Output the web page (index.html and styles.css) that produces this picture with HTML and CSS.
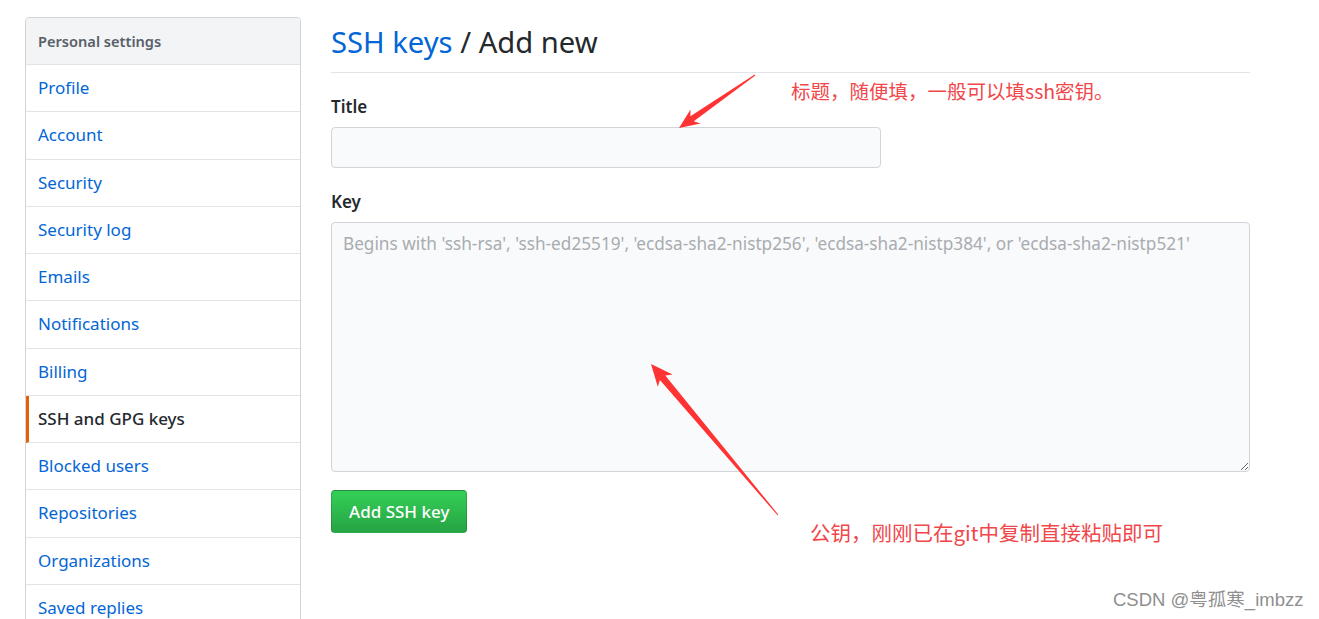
FILE: index.html
```html
<!DOCTYPE html>
<html lang="zh-CN">
<head>
<meta charset="utf-8">
<title>SSH keys / Add new</title>
<link rel="stylesheet" href="styles.css">
</head>
<body>
<div class="page">
  <nav class="menu">
    <div class="menu-heading">Personal settings</div>
    <a class="menu-item" href="#">Profile</a>
    <a class="menu-item" href="#">Account</a>
    <a class="menu-item" href="#">Security</a>
    <a class="menu-item" href="#">Security log</a>
    <a class="menu-item" href="#">Emails</a>
    <a class="menu-item" href="#">Notifications</a>
    <a class="menu-item" href="#">Billing</a>
    <a class="menu-item selected" href="#">SSH and GPG keys</a>
    <a class="menu-item" href="#">Blocked users</a>
    <a class="menu-item" href="#">Repositories</a>
    <a class="menu-item" href="#">Organizations</a>
    <a class="menu-item" href="#">Saved replies</a>
  </nav>
  <main class="content">
    <h1 class="subhead"><a href="#" class="crumb">SSH keys</a> / Add new</h1>
    <form class="form">
      <label class="label" for="title">Title</label>
      <input id="title" class="input-title" type="text">
      <label class="label" for="key">Key</label>
      <textarea id="key" class="input-key" placeholder="Begins with 'ssh-rsa', 'ssh-ed25519', 'ecdsa-sha2-nistp256', 'ecdsa-sha2-nistp384', or 'ecdsa-sha2-nistp521'"></textarea>
      <div class="actions"><button type="button" class="btn-primary">Add SSH key</button></div>
    </form>
  </main>
</div>

<svg class="arrows" width="1319" height="619" viewBox="0 0 1319 619" aria-hidden="true">
  <polygon fill="#ff3333" points="679,128 700.5,123.5 693.8,121.3 755.3,75.4 754.7,74.6 690.4,116.3 690.5,109.5"/>
  <polygon fill="#ff3333" points="651,364 672.6,374.6 665.3,375.5 778.4,514.7 777.6,515.3 659.9,380.1 657.8,386.8"/>
</svg>
<div class="note note-title">标题，随便填，一般可以填ssh密钥。</div>
<div class="note note-key">公钥，刚刚已在git中复制直接粘贴即可</div>
<div class="watermark">CSDN @粤孤寒_imbzz</div>
</body>
</html>
```

FILE: styles.css
```css
html, body {
  margin: 0;
  padding: 0;
  overflow: hidden;
  background: #fff;
}
body {
  font-family: "Noto Sans", "Noto Sans CJK SC", sans-serif;
  color: #24292e;
  position: relative;
  width: 1319px;
  height: 619px;
}
.page {
  display: flex;
  gap: 30px;
  padding: 17px 0 0 25px;
}
.menu {
  width: 276px;
  flex: none;
  display: flex;
  flex-direction: column;
  border: 1px solid #d1d5da;
  border-radius: 4px;
  box-sizing: border-box;
}
.menu-heading {
  height: 46px;
  line-height: 46px;
  padding-left: 12px;
  background: #f3f4f6;
  color: #586069;
  font-weight: 600;
  font-size: 14.6px;
  border-bottom: 1px solid #e1e4e8;
  border-radius: 4px 4px 0 0;
}
.menu-item {
  display: block;
  height: 46.25px;
  line-height: 46px;
  padding-left: 12px;
  font-size: 17px;
  color: #0366d6;
  text-decoration: none;
  border-bottom: 1px solid #e1e4e8;
}
.menu-item.selected {
  color: #24292e;
  font-weight: 500;
  border-left: 3px solid #e36209;
  padding-left: 9px;
}
.content {
  width: 919px;
  flex: none;
}
.subhead {
  margin: 0;
  padding: 5px 0 10px;
  line-height: 40px;
  font-size: 29.2px;
  font-weight: 400;
  border-bottom: 1px solid #e1e4e8;
}
.crumb {
  color: #0366d6;
  text-decoration: none;
}
.form {
  display: flex;
  flex-direction: column;
  align-items: flex-start;
}
.label {
  margin-top: 22px;
  margin-bottom: 8px;
  line-height: 24px;
  font-size: 17px;
  font-weight: 600;
}
.input-title {
  width: 550px;
  height: 41px;
  box-sizing: border-box;
  border: 1px solid #d1d5da;
  border-radius: 4px;
  background: #f9fafb;
  margin: 0;
}
.input-key {
  width: 919px;
  height: 250px;
  box-sizing: border-box;
  border: 1px solid #d1d5da;
  border-radius: 4px;
  background: #f9fafb;
  margin: 0;
  padding: 9px 11px;
  font-family: "Noto Sans", sans-serif;
  font-size: 17.2px;
  line-height: 24px;
}
.input-key::placeholder {
  color: #a8acb0;
}
.actions {
  margin-top: 18px;
}
.btn-primary {
  height: 43px;
  padding: 0 17px;
  font-family: "Noto Sans", sans-serif;
  font-size: 17px;
  font-weight: 500;
  color: #fff;
  background: linear-gradient(#34d058, #28a745 90%);
  border: 1px solid rgba(27, 31, 35, 0.2);
  border-radius: 4px;
}
.arrows {
  position: absolute;
  left: 0;
  top: 0;
  pointer-events: none;
}
.note {
  position: absolute;
  font-family: "Noto Sans CJK SC", sans-serif;
  line-height: 26px;
  color: #f0474b;
  white-space: nowrap;
}
.note-title {
  left: 791px;
  top: 78px;
  font-size: 19.5px;
}
.note-key {
  left: 810px;
  top: 519px;
  font-size: 20.5px;
}
.watermark {
  position: absolute;
  left: 1113px;
  top: 588px;
  font-family: "Liberation Sans", "Noto Sans CJK SC", sans-serif;
  font-size: 18.5px;
  line-height: 24px;
  color: #8f8f8f;
  white-space: nowrap;
}
```
